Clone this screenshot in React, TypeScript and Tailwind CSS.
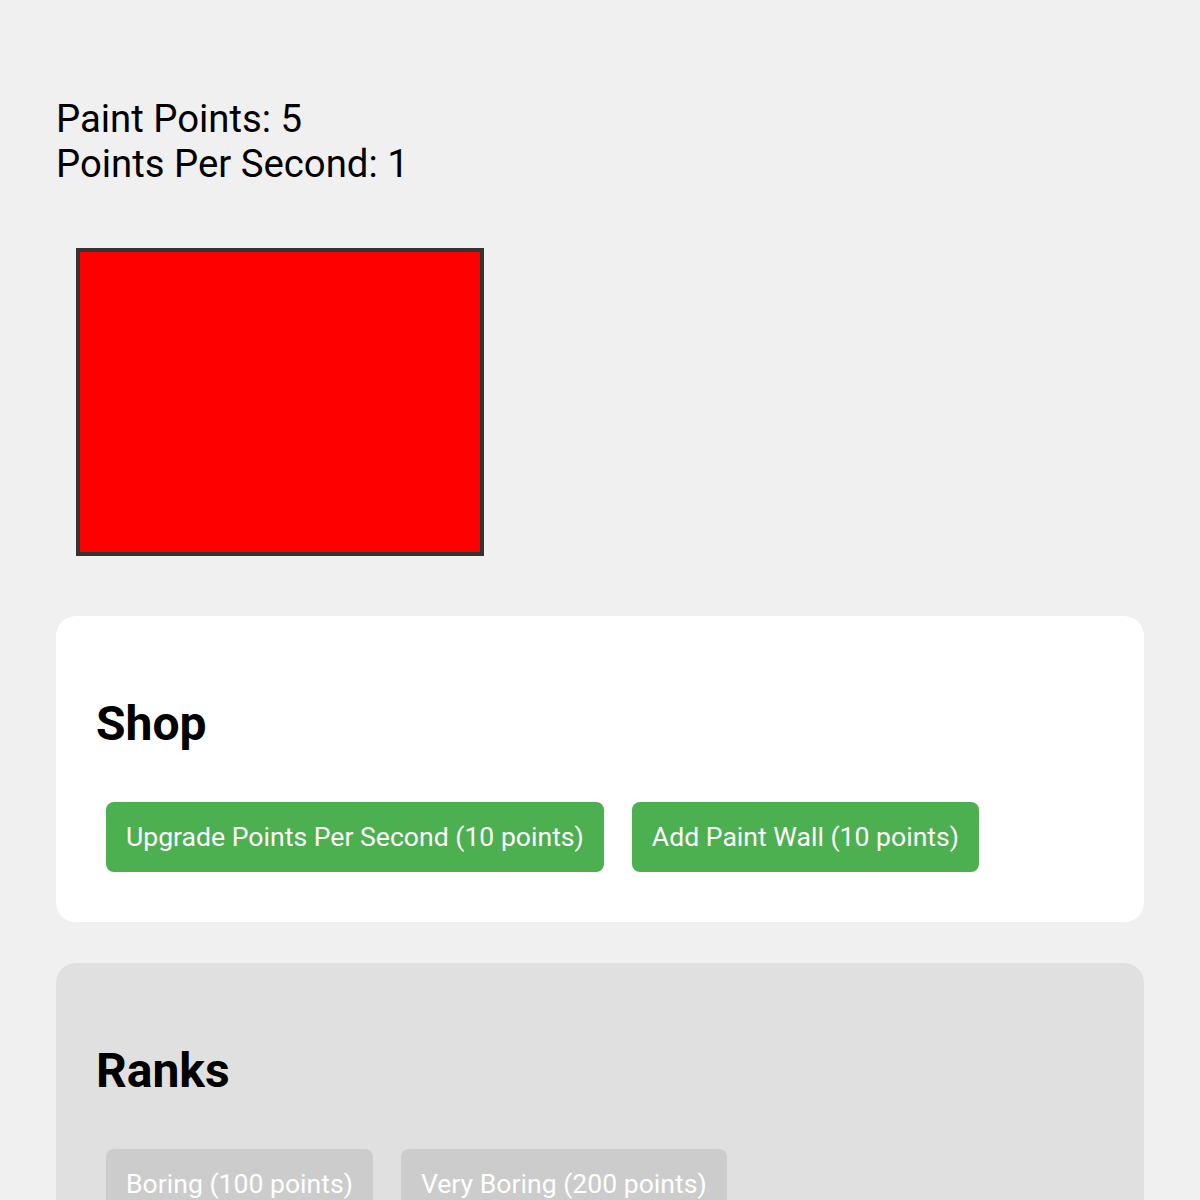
import React from "react"

const shopItems = ["Upgrade Points Per Second (10 points)", "Add Paint Wall (10 points)"]
const ranks = ["Boring (100 points)", "Very Boring (200 points)"]

export default function App() {
  return (
    <div
      className="min-h-[1200px] bg-[#f0f0f0] px-[56px] pt-[96px] pb-10 text-black"
      style={{ fontFamily: "Roboto, 'Noto Sans', sans-serif" }}
    >
      <div className="text-[38.3px] leading-[45px]">
        <div>Paint Points: 5</div>
        <div>Points Per Second: 1</div>
      </div>

      <div className="mt-[62px] ml-[20px] h-[308px] w-[408px] border-4 border-[#333] bg-[#ff0000]" />

      <div className="mt-[60px] rounded-[20px] bg-white p-[40px]">
        <h2 className="mt-[39px] mb-[40px] text-[48px] font-bold leading-[57px]">Shop</h2>
        <div className="flex flex-wrap">
          {shopItems.map((item) => (
            <button
              key={item}
              className="m-[10px] mr-[18px] rounded-[8px] bg-[#4caf50] px-[20px] py-[20px] text-[26.6px] leading-[30px] text-white"
            >
              {item}
            </button>
          ))}
        </div>
      </div>

      <div className="mt-[41px] rounded-[20px] bg-[#e0e0e0] p-[40px]">
        <h2 className="mt-[39px] mb-[40px] text-[48px] font-bold leading-[57px]">Ranks</h2>
        <div className="flex flex-wrap">
          {ranks.map((item) => (
            <button
              key={item}
              className="m-[10px] mr-[18px] rounded-[8px] bg-[#cccccc] px-[20px] py-[20px] text-[26.6px] leading-[30px] text-white"
            >
              {item}
            </button>
          ))}
        </div>
      </div>
    </div>
  )
}
